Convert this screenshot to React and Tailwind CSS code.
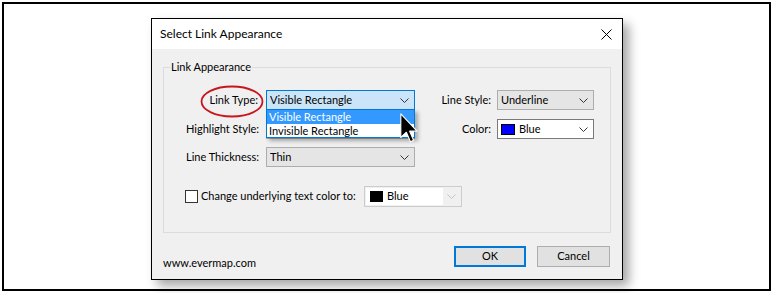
import React from 'react';

const Chevron = ({ color = '#333' }) => (
  <svg width="9" height="5" viewBox="0 0 9 5" className="shrink-0">
    <polyline points="0.5,0.5 4.5,4.5 8.5,0.5" fill="none" stroke={color} strokeWidth="1" />
  </svg>
);

const Select = ({ value, width, variant = 'grey', swatch, children }) => {
  const styles = {
    grey: 'bg-[#e5e5e5] border-[#adadad]',
    focus: 'bg-[#cce4f7] border-[#0078d7]',
    white: 'bg-white border-[#7a7a7a]',
  };
  return (
    <div className={`relative h-[20px] border flex items-center pl-[3px] pr-[5px] shrink-0 ${styles[variant]} ${width}`}>
      {swatch && <span className="w-[14px] h-[11px] border border-black mr-[4px] shrink-0" style={{ background: swatch }}></span>}
      <span className="flex-1 truncate">{value}</span>
      <Chevron />
      {children}
    </div>
  );
};

const Label = ({ children, width = 'w-[72px]' }) => (
  <span className={`block ${width} text-right shrink-0 whitespace-nowrap`}>{children}</span>
);

export default function App() {
  return (
    <div className="w-[773px] h-[293px] bg-white p-[2px] font-['Lato',sans-serif] text-[11px] text-black">
      <div className="h-[289px] border-2 border-black pl-[147px] pt-[14px]">
        {/* Dialog */}
        <div className="w-[472px] h-[262px] border border-black bg-[#f0f0f0] flex flex-col shadow-[6px_6px_10px_rgba(0,0,0,0.35)]">
          {/* Title bar */}
          <div className="h-[30px] bg-white flex items-center justify-between pl-[8px] pr-[10px] shrink-0">
            <span className="text-[12px]">Select Link Appearance</span>
            <svg width="11" height="11" viewBox="0 0 11 11">
              <line x1="0.5" y1="0.5" x2="10.5" y2="10.5" stroke="#000" strokeWidth="1" />
              <line x1="10.5" y1="0.5" x2="0.5" y2="10.5" stroke="#000" strokeWidth="1" />
            </svg>
          </div>

          {/* Body */}
          <div className="flex-1 px-[11px]">
            {/* Group box */}
            <div className="relative mt-[18px] h-[166px] border border-[#dcdcdc] pt-[22px]">
              <span className="absolute -top-[9px] left-[6px] bg-[#f0f0f0] px-[1px] leading-[16px]">Link Appearance</span>

              {/* Row 1 */}
              <div className="flex items-center h-[20px] pl-[22px]">
                <div className="relative flex shrink-0">
                  <Label>Link Type:</Label>
                  <svg className="absolute left-[14px] -top-[7px]" width="64" height="33" viewBox="0 0 64 33">
                    <ellipse cx="32" cy="16.5" rx="30.5" ry="15" fill="none" stroke="#c8161d" strokeWidth="1.8" />
                  </svg>
                </div>
                <div className="ml-[8px] relative z-10 shrink-0">
                  <Select value="Visible Rectangle" width="w-[149px]" variant="focus">
                    {/* open dropdown list */}
                    <div className="absolute top-full -left-[1px] w-[149px] bg-white border border-[#0078d7] shadow-[3px_3px_4px_rgba(0,0,0,0.3)]">
                      <div className="h-[14px] leading-[14px] pl-[2px] bg-[#3399ff] text-white">Visible Rectangle</div>
                      <div className="h-[13px] leading-[13px] pl-[2px]">Invisible Rectangle</div>
                    </div>
                    {/* mouse cursor */}
                    <svg className="absolute left-[133px] top-[22px]" width="19" height="30" viewBox="0 0 12 19">
                      <path d="M0.5 0.5 L0.5 15.5 L4 12.2 L6.6 18.2 L8.6 17.3 L6.1 11.5 L10.8 11.5 Z" fill="#000" stroke="#fff" strokeWidth="0.7" strokeLinejoin="round" />
                    </svg>
                  </Select>
                </div>
                <Label width="w-[76px]">Line Style:</Label>
                <div className="ml-[6px] shrink-0">
                  <Select value="Underline" width="w-[97px]" />
                </div>
              </div>

              {/* Row 2 (its select is covered by the open list) */}
              <div className="flex items-center h-[20px] pl-[22px] mt-[9px]">
                <Label>Highlight Style:</Label>
                <div className="ml-[8px] shrink-0">
                  <Select value="" width="w-[149px]" />
                </div>
                <Label width="w-[76px]">Color:</Label>
                <div className="ml-[6px] shrink-0">
                  <Select value="Blue" width="w-[97px]" variant="white" swatch="#0000ff" />
                </div>
              </div>

              {/* Row 3 */}
              <div className="flex items-center h-[20px] pl-[22px] mt-[8px]">
                <Label>Line Thickness:</Label>
                <div className="ml-[8px] shrink-0">
                  <Select value="Thin" width="w-[149px]" />
                </div>
              </div>

              {/* Row 4 */}
              <div className="flex items-center h-[21px] pl-[21px] mt-[19px]">
                <span className="w-[13px] h-[13px] border border-[#333] bg-white shrink-0"></span>
                <span className="ml-[3px] w-[163px] shrink-0 whitespace-nowrap">Change underlying text color to:</span>
                <div className="w-[98px] h-[21px] shrink-0 border border-[#cccccc] flex items-center p-[1px]">
                  <div className="h-full w-[77px] bg-white flex items-center pl-[4px]">
                    <span className="w-[13px] h-[11px] bg-black mr-[4px]"></span>
                    <span>Blue</span>
                  </div>
                  <div className="flex-1 flex justify-center">
                    <Chevron color="#c4c4c4" />
                  </div>
                </div>
              </div>
            </div>

            {/* Footer */}
            <div className="flex items-start justify-between mt-[13px] pr-[1px]">
              <span className="mt-[9px]">www.evermap.com</span>
              <div className="flex gap-[11px]">
                <button className="w-[72px] h-[21px] bg-[#e1e1e1] border-2 border-[#0078d7] flex items-center justify-center">OK</button>
                <button className="w-[73px] h-[21px] bg-[#e1e1e1] border border-[#adadad] flex items-center justify-center">Cancel</button>
              </div>
            </div>
          </div>
        </div>
      </div>
    </div>
  );
}
